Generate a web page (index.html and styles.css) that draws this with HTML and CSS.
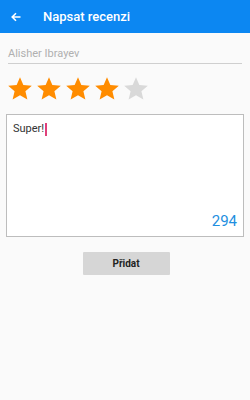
FILE: index.html
```html
<!DOCTYPE html>
<html lang="cs">
<head>
<meta charset="utf-8">
<link rel="stylesheet" href="styles.css">
</head>
<body>
<header class="appbar">
  <svg class="back" width="10" height="10" viewBox="0 0 10 10"><path d="M9.5 5H1.2M5 1.2L1.2 5L5 8.8" fill="none" stroke="#fff" stroke-width="1.6"/></svg>
  <h1 class="title">Napsat recenzi</h1>
</header>
<main class="content">
  <div class="name-field">Alisher Ibrayev</div>
  <div class="stars">
    <svg class="star on" viewBox="0 0 24 24"><path d="M12 1.2l3.1 7.2 7.8.6-5.9 5.1 1.8 7.7L12 17.7l-6.8 4.1 1.8-7.7L1.1 9l7.8-.6z"/></svg>
    <svg class="star on" viewBox="0 0 24 24"><path d="M12 1.2l3.1 7.2 7.8.6-5.9 5.1 1.8 7.7L12 17.7l-6.8 4.1 1.8-7.7L1.1 9l7.8-.6z"/></svg>
    <svg class="star on" viewBox="0 0 24 24"><path d="M12 1.2l3.1 7.2 7.8.6-5.9 5.1 1.8 7.7L12 17.7l-6.8 4.1 1.8-7.7L1.1 9l7.8-.6z"/></svg>
    <svg class="star on" viewBox="0 0 24 24"><path d="M12 1.2l3.1 7.2 7.8.6-5.9 5.1 1.8 7.7L12 17.7l-6.8 4.1 1.8-7.7L1.1 9l7.8-.6z"/></svg>
    <svg class="star off" viewBox="0 0 24 24"><path d="M12 1.2l3.1 7.2 7.8.6-5.9 5.1 1.8 7.7L12 17.7l-6.8 4.1 1.8-7.7L1.1 9l7.8-.6z"/></svg>
  </div>
  <div class="review-box">
    <div class="review-text">Super!<span class="cursor"></span></div>
    <div class="counter">294</div>
  </div>
  <div class="actions">
    <button class="submit">Přidat</button>
  </div>
</main>
</body>
</html>
```
FILE: styles.css
```css
html, body {
  margin: 0;
  padding: 0;
}
body {
  width: 250px;
  height: 400px;
  background: #fafafa;
  font-family: Roboto, "Noto Sans", sans-serif;
}
.appbar {
  height: 33px;
  background: #0c87f2;
  display: flex;
  align-items: center;
  box-sizing: border-box;
  padding-left: 11px;
}
.back {
  display: block;
}
.title {
  margin: 0 0 0 22px;
  color: #fff;
  font-size: 13px;
  font-weight: 500;
  line-height: 1;
}
.content {
  padding: 0 8px;
}
.name-field {
  margin-top: 14px;
  font-size: 11px;
  line-height: 14px;
  color: #b0b0b0;
  padding-bottom: 2px;
  border-bottom: 1px solid #cfcfcf;
}
.stars {
  display: flex;
  gap: 3px;
  margin-top: 12px;
  margin-left: -1px;
}
.star {
  width: 26px;
  height: 26px;
  display: block;
}
.star.on { fill: #ff8c00; }
.star.off { fill: #d9d9d9; }
.review-box {
  margin: 12px -2px 0 -2px;
  height: 123px;
  box-sizing: border-box;
  background: #fff;
  border: 1px solid #bdbdbd;
  display: flex;
  flex-direction: column;
  justify-content: space-between;
  padding: 7px 6px 7px 6px;
}
.review-text {
  font-size: 11px;
  line-height: 14px;
  color: #333;
  display: flex;
  align-items: center;
}
.cursor {
  display: inline-block;
  width: 1.5px;
  height: 13px;
  background: #e0407a;
  margin-left: 1px;
}
.counter {
  align-self: flex-end;
  font-size: 15px;
  line-height: 16px;
  color: #1e8fe0;
}
.actions {
  display: flex;
  justify-content: center;
  margin-top: 15px;
}
.submit {
  width: 87px;
  height: 23px;
  border: none;
  border-radius: 1px;
  background: #d6d6d6;
  font-family: Roboto, "Noto Sans", sans-serif;
  font-weight: 700;
  font-size: 10px;
  color: #222;
  padding: 0;
  margin-left: 2px;
}
```
